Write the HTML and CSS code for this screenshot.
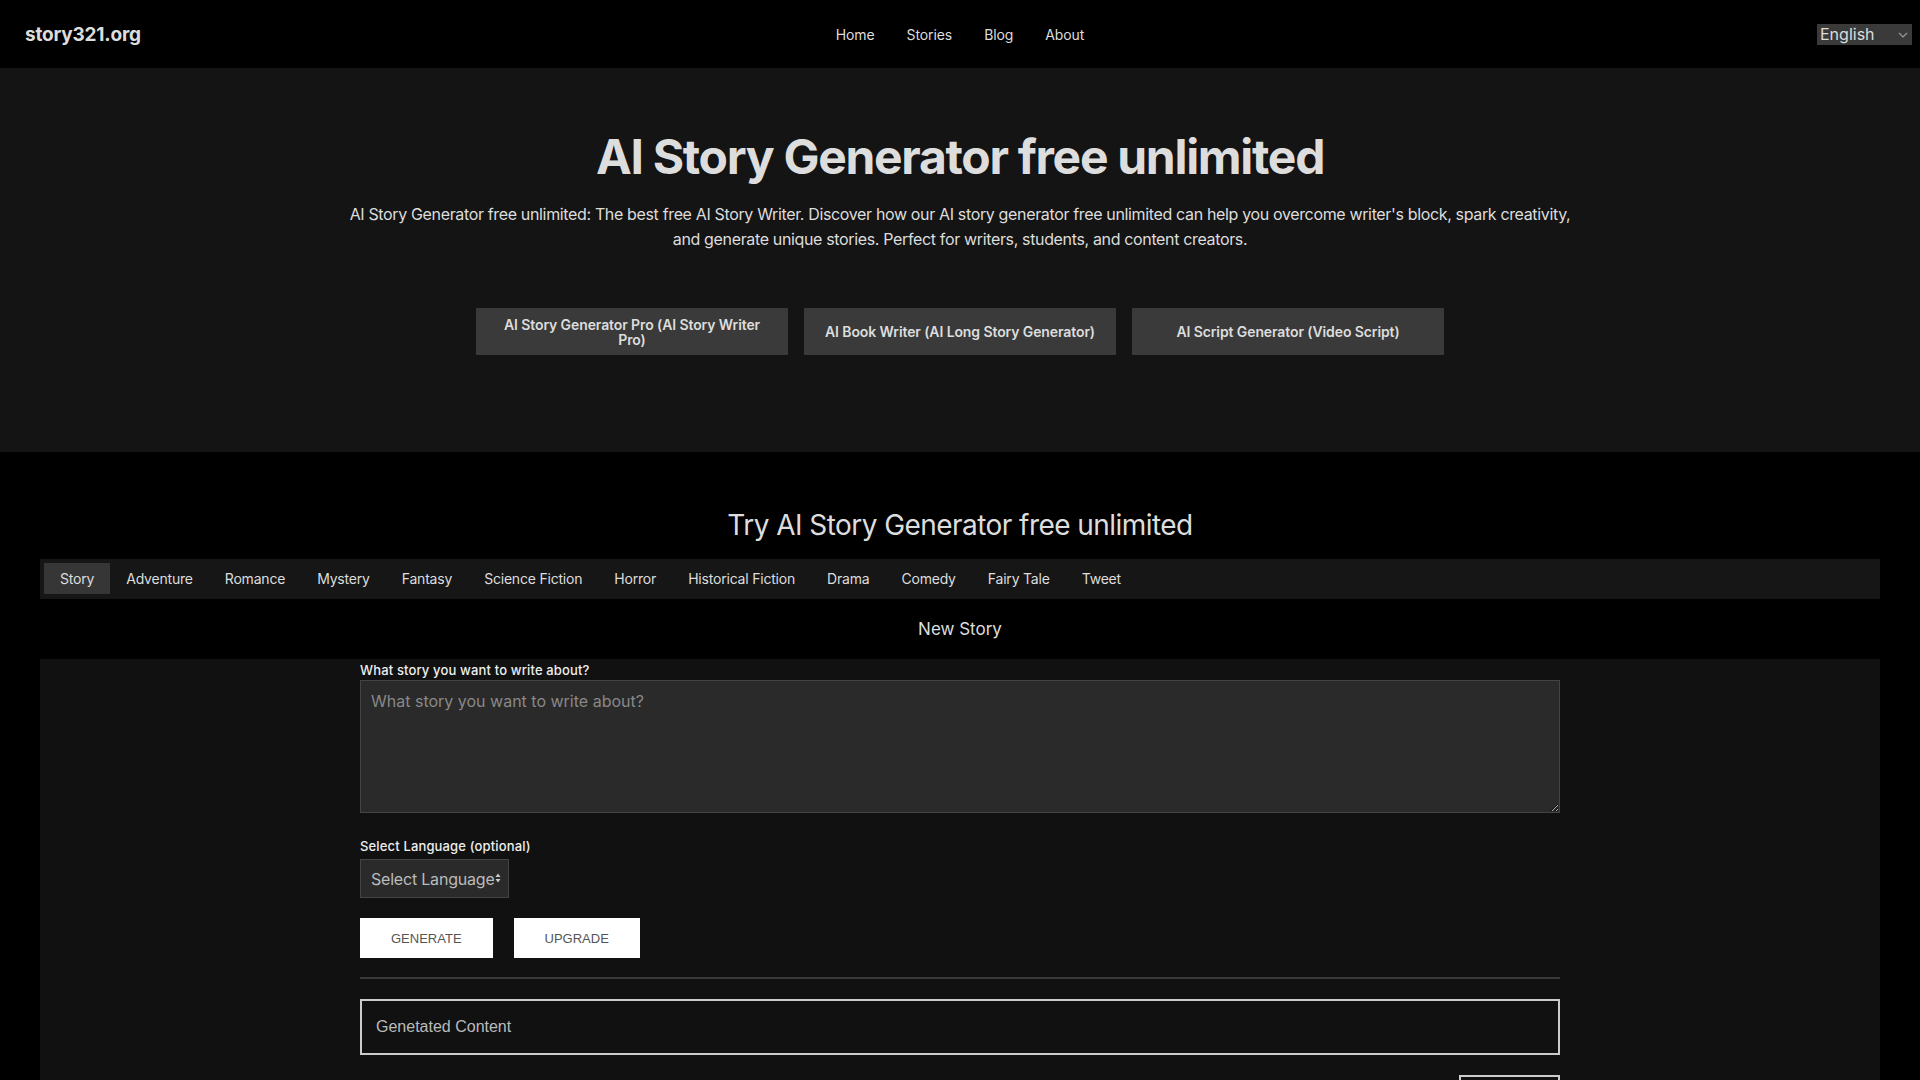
FILE: index.html
```html
<!DOCTYPE html>
<html lang="en">
<head>
    <meta charset="UTF-8">
    <meta name="viewport" content="width=device-width, initial-scale=1.0">
    <title>AI Story Generator free unlimited - story321.org</title>
    <link rel="stylesheet" href="styles.css">
</head>
<body>
    <!-- Header -->
    <header class="site-header">
        <a href="#" class="logo">story321.org</a>
        <nav class="main-nav">
            <a href="#" class="nav-link">Home</a>
            <a href="#" class="nav-link">Stories</a>
            <a href="#" class="nav-link">Blog</a>
            <a href="#" class="nav-link">About</a>
        </nav>
        <div class="lang-switch">
            <select class="lang-select">
                <option>English</option>
            </select>
            <svg class="lang-arrow" width="10" height="6" viewBox="0 0 10 6">
                <path d="M1 1l4 4 4-4" fill="none" stroke="#999" stroke-width="1.2"/>
            </svg>
        </div>
    </header>

    <!-- Hero -->
    <section class="hero">
        <h1>AI Story Generator free unlimited</h1>
        <p class="hero-text">AI Story Generator free unlimited: The best free AI Story Writer. Discover how our AI story generator free unlimited can help you overcome writer's block, spark creativity, and generate unique stories. Perfect for writers, students, and content creators.</p>
        <div class="hero-links">
            <a href="#" class="hero-btn">AI Story Generator Pro (AI Story Writer Pro)</a>
            <a href="#" class="hero-btn">AI Book Writer (AI Long Story Generator)</a>
            <a href="#" class="hero-btn">AI Script Generator (Video Script)</a>
        </div>
    </section>

    <!-- Generator -->
    <section class="generator">
        <h2>Try AI Story Generator free unlimited</h2>
        <div class="tabs">
            <a href="#" class="tab active">Story</a>
            <a href="#" class="tab">Adventure</a>
            <a href="#" class="tab">Romance</a>
            <a href="#" class="tab">Mystery</a>
            <a href="#" class="tab">Fantasy</a>
            <a href="#" class="tab">Science Fiction</a>
            <a href="#" class="tab">Horror</a>
            <a href="#" class="tab">Historical Fiction</a>
            <a href="#" class="tab">Drama</a>
            <a href="#" class="tab">Comedy</a>
            <a href="#" class="tab">Fairy Tale</a>
            <a href="#" class="tab">Tweet</a>
        </div>
        <h3 class="panel-title">New Story</h3>

        <div class="panel">
            <form class="story-form">
                <label for="prompt" class="form-label">What story you want to write about?</label>
                <textarea id="prompt" class="prompt-input" placeholder="What story you want to write about?"></textarea>

                <label for="language" class="form-label lang-label">Select Language (optional)</label>
                <div class="language-wrap">
                    <select id="language" class="language-select">
                        <option>Select Language</option>
                    </select>
                    <svg class="stepper" width="6" height="10" viewBox="0 0 6 10">
                        <path d="M3 0.5L5.5 4H0.5z M3 9.5L5.5 6H0.5z" fill="#ccc"/>
                    </svg>
                </div>

                <div class="form-actions">
                    <button type="button" class="action-btn">Generate</button>
                    <button type="button" class="action-btn">Upgrade</button>
                </div>

                <hr class="divider">

                <div class="output-box">Genetated Content</div>
                <div class="output-tools">
                    <button type="button" class="copy-btn" aria-label="Copy"></button>
                </div>
            </form>
        </div>
    </section>
</body>
</html>
```

FILE: styles.css
```css
* {
    margin: 0;
    padding: 0;
    box-sizing: border-box;
}

body {
    background-color: #000;
    color: #ddd;
    font-family: 'Inter', 'Noto Sans', sans-serif;
    overflow: hidden;
}

a {
    text-decoration: none;
    color: inherit;
}

/* Header */
.site-header {
    height: 68px;
    display: grid;
    grid-template-columns: 1fr auto 1fr;
    align-items: center;
    padding: 0 25px;
    background-color: #000;
}

.logo {
    font-size: 19px;
    font-weight: 700;
    letter-spacing: -0.2px;
    color: #ddd;
}

.main-nav {
    display: flex;
    gap: 32px;
}

.nav-link {
    font-size: 14px;
    letter-spacing: -0.1px;
    color: #ddd;
}

.lang-switch {
    justify-self: end;
    position: relative;
    margin-right: -17px;
}

.lang-select {
    appearance: none;
    -webkit-appearance: none;
    background-color: #3a3a3a;
    color: #ddd;
    border: none;
    border-radius: 0;
    font-family: inherit;
    font-size: 16px;
    width: 95px;
    height: 21px;
    padding: 0 3px;
}

.lang-arrow {
    position: absolute;
    right: 4px;
    top: 8px;
    pointer-events: none;
}

/* Hero */
.hero {
    background-color: #141414;
    text-align: center;
    padding: 58px 0 97px;
}

.hero h1 {
    font-size: 48px;
    line-height: 62px;
    font-weight: 700;
    letter-spacing: -1.3px;
    color: #ddd;
}

.hero-text {
    max-width: 1240px;
    margin: 14px auto 0;
    font-size: 16px;
    line-height: 25px;
    letter-spacing: -0.35px;
    color: #ddd;
}

.hero-links {
    display: flex;
    justify-content: center;
    gap: 16px;
    margin-top: 56px;
}

.hero-btn {
    width: 312px;
    height: 47px;
    padding: 0 12px;
    display: flex;
    align-items: center;
    justify-content: center;
    text-align: center;
    background-color: #3a3a3a;
    color: #ddd;
    font-size: 14px;
    font-weight: 600;
    line-height: 15px;
    letter-spacing: -0.1px;
}

.hero-btn:first-child {
    padding: 0 24px;
}

/* Generator */
.generator {
    padding: 55px 40px 0;
}

.generator h2 {
    text-align: center;
    font-size: 28px;
    line-height: 36px;
    font-weight: 400;
    letter-spacing: -0.55px;
    color: #ddd;
    margin-bottom: 16px;
}

.tabs {
    display: flex;
    background-color: #161616;
    padding: 4px;
    height: 40px;
}

.tab {
    padding: 0 16px;
    height: 31px;
    line-height: 31px;
    font-size: 14px;
    letter-spacing: -0.2px;
    color: #ddd;
}

.tab.active {
    background-color: #363636;
}

.panel-title {
    text-align: center;
    font-size: 17px;
    font-weight: 400;
    line-height: 24px;
    margin: 18px 0;
    color: #ddd;
}

.panel {
    background-color: #111;
    padding-top: 3px;
    min-height: 500px;
}

.story-form {
    width: 1200px;
    margin: 0 auto;
}

.form-label {
    display: block;
    font-size: 13px;
    font-weight: 500;
    line-height: 16px;
    letter-spacing: 0.15px;
    color: #eee;
    margin-bottom: 2px;
}

.prompt-input {
    display: block;
    width: 100%;
    height: 133px;
    background-color: #2a2a2a;
    border: 1px solid #444;
    color: #ddd;
    font-family: inherit;
    font-size: 16px;
    padding: 10px 10px;
    resize: vertical;
}

.prompt-input::placeholder {
    color: #888;
}

.lang-label {
    margin-top: 25px;
    margin-bottom: 5px;
}

.language-wrap {
    position: relative;
    width: 149px;
}

.language-select {
    appearance: none;
    -webkit-appearance: none;
    display: block;
    width: 149px;
    height: 39px;
    background-color: #2a2a2a;
    border: 1px solid #444;
    border-radius: 0;
    color: #bbb;
    font-family: inherit;
    font-size: 16px;
    letter-spacing: -0.2px;
    padding: 0 14px 0 10px;
}

.stepper {
    position: absolute;
    right: 8px;
    top: 14px;
    pointer-events: none;
}

.form-actions {
    display: flex;
    gap: 21px;
    margin-top: 20px;
}

.action-btn {
    height: 40px;
    padding: 0 31px;
    background-color: #fff;
    color: #555;
    border: none;
    font-family: 'Liberation Sans', Arial, sans-serif;
    font-size: 13px;
    text-transform: uppercase;
    cursor: pointer;
}

.divider {
    border: none;
    border-top: 2px solid #3a3a3a;
    margin: 19px 0 20px;
}

.output-box {
    height: 56px;
    border: 2px solid #ccc;
    padding: 0 14px;
    display: flex;
    align-items: center;
    font-family: 'Liberation Sans', Arial, sans-serif;
    font-size: 16px;
    color: #bbb;
}

.output-tools {
    display: flex;
    justify-content: flex-end;
    margin-top: 20px;
}

.copy-btn {
    width: 101px;
    height: 36px;
    background: transparent;
    border: 2px solid #ccc;
}
```
